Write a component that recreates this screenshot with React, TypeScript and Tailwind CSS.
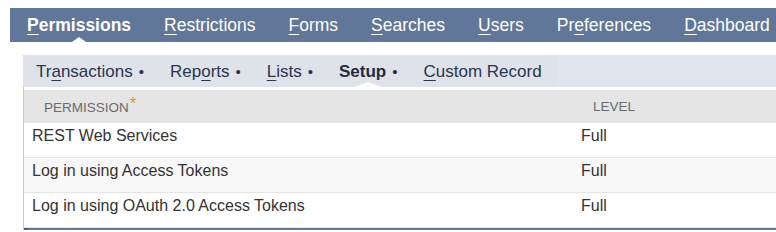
import React from "react";

const U = ({ children }: { children: React.ReactNode }) => (
  <span className="underline underline-offset-[3px] decoration-1">{children}</span>
);

export default function App() {
  const nav: React.ReactNode[] = [
    <span className="font-bold"><U>P</U>ermissions</span>,
    <span><U>R</U>estrictions</span>,
    <span><U>F</U>orms</span>,
    <span><U>S</U>earches</span>,
    <span><U>U</U>sers</span>,
    <span>Pr<U>e</U>ferences</span>,
    <span><U>D</U>ashboard</span>,
  ];
  const sub: { node: React.ReactNode; bold?: boolean; bullet: boolean }[] = [
    { node: <>Tr<U>a</U>nsactions</>, bullet: true },
    { node: <>Rep<U>o</U>rts</>, bullet: true },
    { node: <><U>L</U>ists</>, bullet: true },
    { node: <>Setup</>, bold: true, bullet: true },
    { node: <><U>C</U>ustom Record</>, bullet: false },
  ];
  const rows = [
    "REST Web Services",
    "Log in using Access Tokens",
    "Log in using OAuth 2.0 Access Tokens",
  ];
  return (
    <div
      className="w-[776px] h-[232px] bg-white overflow-hidden pt-[8px]"
      style={{ fontFamily: '"Liberation Sans", Arial, sans-serif' }}
    >
      {/* top nav */}
      <div className="relative ml-[10px] h-[34px] bg-[#607799] flex items-center pl-[17px] pt-[2px] gap-[33px] text-white text-[17.5px] whitespace-nowrap">
        {nav.map((n, i) => (
          <div key={i} className="relative leading-none">
            {n}
            {i === 0 && (
              <div className="absolute left-1/2 -translate-x-1/2 top-[20px] w-0 h-0 border-l-[7px] border-r-[7px] border-b-[5px] border-l-transparent border-r-transparent border-b-white" />
            )}
          </div>
        ))}
      </div>

      {/* sub tabs */}
      <div className="ml-[23px] mt-[13px] h-[32px] flex">
        <div className="w-[535px] bg-[#dfe2e9] flex items-center pl-[13px] gap-[26px] text-[17px] text-[#27364f] whitespace-nowrap">
          {sub.map((s, i) => (
            <div key={i} className={"relative flex items-center leading-none " + (s.bold ? "font-bold text-[#1f2d44]" : "")}>
              <span>{s.node}</span>
              {s.bullet && <span className="ml-[6px] text-[15px] font-normal">•</span>}
              {s.bold && (
                <div className="absolute left-1/2 -translate-x-1/2 top-[19px] w-0 h-0 border-l-[14px] border-r-[14px] border-b-[5px] border-l-transparent border-r-transparent border-b-white" />
              )}
            </div>
          ))}
        </div>
        <div className="flex-1 bg-[#dfe5ee]" />
      </div>

      {/* table */}
      <div className="ml-[23px] border-l border-[#c8c8c8] pt-[3px]">
        <div className="h-[33px] bg-[#e5e5e5] flex items-center text-[13.5px] text-[#6b6b6b] uppercase">
          <div className="w-[549px] pl-[20px] leading-none">
            PERMISSION<span className="text-[#e39a1e] text-[17px] relative top-[-3px] ml-[1px]">*</span>
          </div>
          <div className="pl-[20px] leading-none">LEVEL</div>
        </div>
        {rows.map((r, i) => (
          <div
            key={i}
            className={"h-[35px] flex border-b border-[#e5e5e5] text-[16px] text-[#333333] " + (i === 1 ? "bg-[#f8f8f8]" : "bg-white")}
          >
            <div className="w-[549px] pl-[8px] pt-[3px] leading-[20px]">{r}</div>
            <div className="pl-[8px] pt-[3px] leading-[20px]">Full</div>
          </div>
        ))}
        <div className="h-[2px] bg-[#607799] flex">
          <div className="w-[4px] bg-[#4a5f80]" />
        </div>
      </div>
    </div>
  );
}
